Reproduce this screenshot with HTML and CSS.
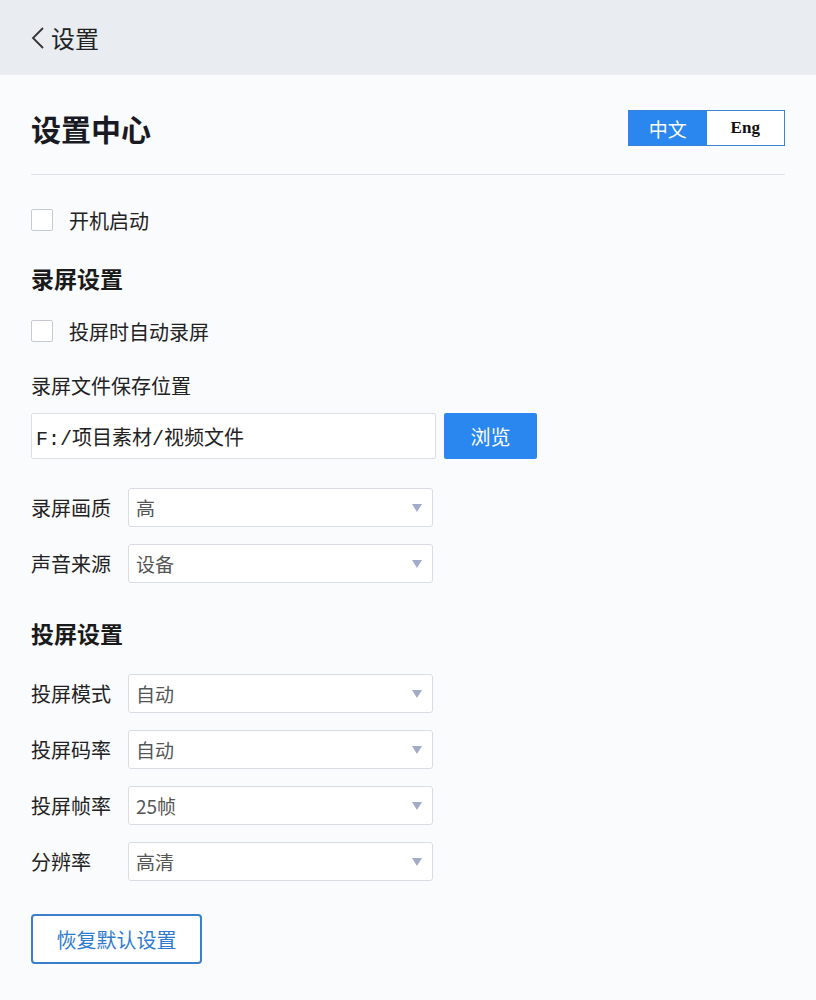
FILE: index.html
```html
<!DOCTYPE html>
<html lang="zh-CN">
<head>
  <meta charset="UTF-8">
  <meta name="viewport" content="width=device-width, initial-scale=1.0">
  <title>设置</title>
  <link rel="stylesheet" href="styles.css">
</head>
<body>

  <header class="barra">
    <svg class="volver" width="14" height="24" viewBox="0 0 14 24">
      <polyline points="12,2 2,12 12,22" fill="none" stroke="#333" stroke-width="1.8"/>
    </svg>
    <span>设置</span>
  </header>

  <main class="contenido">
    <div class="titulo-fila">
      <h1>设置中心</h1>
      <div class="idioma">
        <span class="activo">中文</span>
        <span class="eng">Eng</span>
      </div>
    </div>

    <label class="check-fila primera">
      <span class="caja"></span>
      开机启动
    </label>

    <h2>录屏设置</h2>

    <label class="check-fila">
      <span class="caja"></span>
      投屏时自动录屏
    </label>

    <p class="etiqueta">录屏文件保存位置</p>
    <div class="ruta-fila">
      <div class="ruta">F:/项目素材/视频文件</div>
      <button class="boton-azul">浏览</button>
    </div>

    <div class="select-fila primera-select">
      <span class="nombre">录屏画质</span>
      <div class="select">高<i class="flecha"></i></div>
    </div>
    <div class="select-fila">
      <span class="nombre">声音来源</span>
      <div class="select">设备<i class="flecha"></i></div>
    </div>

    <h2 class="seccion2">投屏设置</h2>

    <div class="select-fila primera-select2">
      <span class="nombre">投屏模式</span>
      <div class="select">自动<i class="flecha"></i></div>
    </div>
    <div class="select-fila">
      <span class="nombre">投屏码率</span>
      <div class="select">自动<i class="flecha"></i></div>
    </div>
    <div class="select-fila">
      <span class="nombre">投屏帧率</span>
      <div class="select">25帧<i class="flecha"></i></div>
    </div>
    <div class="select-fila">
      <span class="nombre">分辨率</span>
      <div class="select">高清<i class="flecha"></i></div>
    </div>

    <button class="restaurar">恢复默认设置</button>
  </main>

</body>
</html>
```

FILE: styles.css
```css
body {
  margin: 0;
  font-family: "Noto Sans CJK SC", "Noto Sans", sans-serif;
  background-color: #fafbfd;
  color: #222;
}

.barra {
  height: 75px;
  background-color: #e9ecf1;
  display: flex;
  align-items: center;
  padding-left: 31px;
  gap: 6px;
  font-size: 24px;
  color: #222;
}

.contenido {
  padding: 35px 31px 0 31px;
}

.titulo-fila {
  display: flex;
  justify-content: space-between;
  align-items: center;
  height: 36px;
  padding-bottom: 28px;
  border-bottom: 1px solid #dfe2e8;
}

.titulo-fila h1 {
  margin: 0;
  font-size: 30px;
  font-weight: bold;
  color: #1a1a24;
}

.idioma {
  display: flex;
  width: 157px;
  height: 36px;
  box-sizing: border-box;
  border: 1px solid #3a82d8;
  background: #fff;
}

.idioma span {
  flex: 1;
  display: flex;
  align-items: center;
  justify-content: center;
}

.idioma .activo {
  background-color: #2b87f0;
  color: #fff;
  font-size: 19px;
}

.idioma .eng {
  font-family: "Liberation Serif", serif;
  font-weight: bold;
  font-size: 17px;
  color: #111;
}

.check-fila {
  display: flex;
  align-items: center;
  height: 30px;
  margin-top: 23px;
  gap: 16px;
  font-size: 20px;
}

.check-fila.primera {
  margin-top: 30px;
}

.caja {
  width: 20px;
  height: 20px;
  border: 1px solid #c6c9cf;
  border-radius: 2px;
  background: #fff;
}

h2 {
  margin: 28px 0 0 0;
  height: 30px;
  line-height: 30px;
  font-size: 23px;
  font-weight: bold;
  color: #1a1a1a;
}

h2.seccion2 {
  margin-top: 35px;
}

.etiqueta {
  margin: 25px 0 0 0;
  height: 30px;
  line-height: 30px;
  font-size: 20px;
}

.ruta-fila {
  display: flex;
  gap: 8px;
  margin-top: 12px;
  height: 46px;
}

.ruta {
  width: 405px;
  box-sizing: border-box;
  border: 1px solid #dcdfe5;
  border-radius: 2px;
  background: #fff;
  display: flex;
  align-items: center;
  padding-left: 4px;
  font-family: "Liberation Mono", "Noto Sans CJK SC", monospace;
  font-size: 20px;
  color: #222;
}

.boton-azul {
  width: 93px;
  border: none;
  border-radius: 2px;
  background-color: #2b87f0;
  color: #fff;
  font-family: inherit;
  font-size: 20px;
}

.select-fila {
  display: flex;
  align-items: center;
  margin-top: 17px;
  height: 39px;
}

.select-fila.primera-select {
  margin-top: 29px;
}

.select-fila.primera-select2 {
  margin-top: 26px;
}

.nombre {
  width: 97px;
  font-size: 20px;
}

.select {
  width: 305px;
  height: 39px;
  box-sizing: border-box;
  border: 1px solid #d9dce2;
  border-radius: 3px;
  background: #fff;
  display: flex;
  align-items: center;
  justify-content: space-between;
  padding: 0 10px 0 7px;
  font-size: 19px;
  color: #555;
}

.flecha {
  width: 0;
  height: 0;
  border-left: 5px solid transparent;
  border-right: 5px solid transparent;
  border-top: 8px solid #a3abc6;
}

.restaurar {
  display: block;
  margin-top: 33px;
  width: 171px;
  height: 50px;
  border: 2px solid #3b7fcc;
  border-radius: 4px;
  background: #fff;
  color: #2f7bd2;
  font-family: inherit;
  font-size: 20px;
}
```
